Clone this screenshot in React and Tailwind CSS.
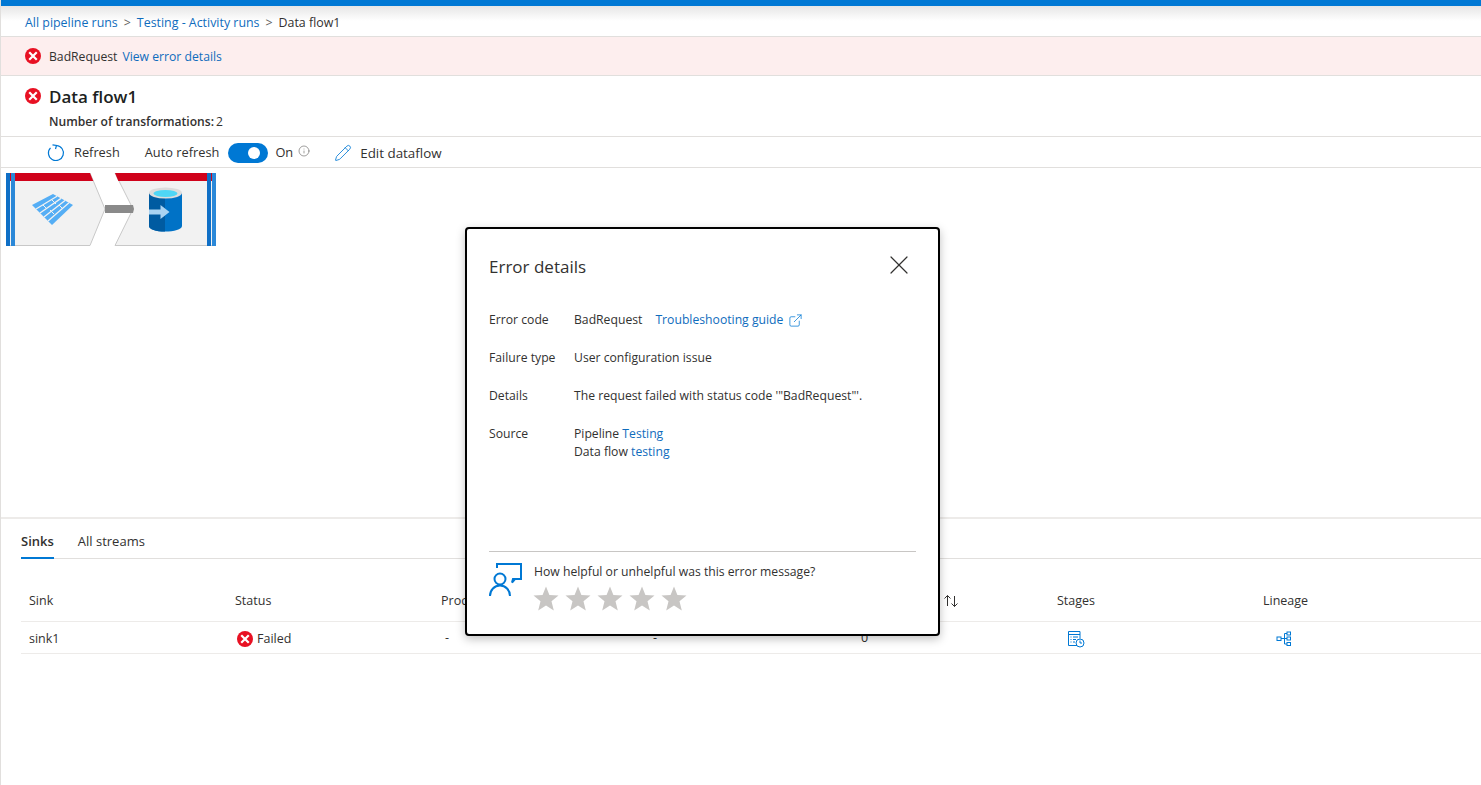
import React from 'react';
import { Pencil, X, ExternalLink, Info } from 'lucide-react';

const ErrorIcon = ({ className }) => (
  <svg viewBox="0 0 16 16" className={className}>
    <circle cx="8" cy="8" r="8" fill="#e81123" />
    <path d="M5 5l6 6M11 5l-6 6" stroke="#fff" strokeWidth="2.2" strokeLinecap="square" />
  </svg>
);

const RefreshIcon = () => (
  <svg width="18" height="18" viewBox="0 0 18 18" fill="none" stroke="#0078d4" strokeWidth="1.200">
    <path d="M9.500 1.500A7.500 7.500 0 1 1 3.500 3.800" />
    <path d="M5.500 0.800L9.500 1.500L8.500 5" />
  </svg>
);

const SortIcon = () => (
  <svg width="16" height="14" viewBox="0 0 16 14" fill="none" stroke="#323130" strokeWidth="1">
    <path d="M4.500 12V1.500M1.500 4.500l3-3 3 3M11.500 2v10.500M8.500 9.500l3 3 3-3" />
  </svg>
);

const Flow = () => (
  <svg width="210" height="73" viewBox="0 0 210 73" className="block">
    <polygon points="0,0 84,0 99,36 84,72.500 0,72.500" fill="#f2f2f2" stroke="#c8c8c8" />
    <polygon points="109,0 210,0 210,72.500 109,72.500 127,36" fill="#f2f2f2" stroke="#c8c8c8" />
    <rect x="99" y="32" width="27" height="8" fill="#8a8a8a" />
    <polygon points="126,32 127,32 128,36 127,40 126,40" fill="#8a8a8a" />
    <polygon points="0,0 84,0 87.300,8 0,8" fill="#d0021b" />
    <polygon points="109,0 210,0 210,8 112.300,8" fill="#d0021b" />
    <rect x="0" y="0" width="4" height="73" fill="#0f6fc6" />
    <rect x="5" y="0" width="4" height="73" fill="#2b88d8" />
    <rect x="201" y="0" width="4" height="73" fill="#0f6fc6" />
    <rect x="206" y="0" width="4" height="73" fill="#2b88d8" />
    <polygon points="26,32 47,21 67,32 46,52" fill="#55aef5" />
    <path d="M30 36L51 23.200M34 40L55 25.400M38 44L59 27.600M42 48L63 29.800" stroke="#f2f2f2" strokeWidth="1.300" />
    <path d="M37 32l4 4M46 27l4 4M44 37l4 4M53 32l3 3" stroke="#f2f2f2" strokeWidth="1" />
    <path d="M143 20v33c0 3.500 7 5.500 16 5.500s17-2 17-5.500v-33z" fill="#0072c6" />
    <path d="M143 20v33c0 3.500 7 5.500 16 5.500v-38z" fill="#005ba1" />
    <ellipse cx="159.500" cy="20" rx="16.500" ry="5.500" fill="#dcdcdc" />
    <ellipse cx="159.500" cy="20.500" rx="12" ry="3.500" fill="#4fd6f5" />
    <path d="M143 36.500h11.500v-4.500l9 7-9 7v-4.500h-11.500z" fill="#a9d3f2" />
  </svg>
);

const StagesIcon = () => (
  <svg width="18" height="18" viewBox="0 0 18 18" fill="none" stroke="#0078d4" strokeWidth="1">
    <path d="M10 15.500H1.500V1.500h11.500v7" />
    <path d="M1.500 4.500h11.500M3.500 7h1M6 7h5M3.500 9.500h1M6 9.500h3M3.500 12h1M6 12h2" />
    <circle cx="13" cy="13" r="4" />
    <path d="M13 10.500V13h2" />
  </svg>
);

const LineageIcon = () => (
  <svg width="16" height="16" viewBox="0 0 16 16" fill="none" stroke="#0078d4" strokeWidth="1">
    <rect x="1" y="6" width="4" height="3.500" />
    <rect x="11" y="1" width="3.500" height="3" />
    <rect x="11" y="6" width="3.500" height="3" />
    <rect x="11" y="11.500" width="3.500" height="3" />
    <path d="M5 7.500h6M8.500 2.500v10.500M8.500 2.500H11M8.500 13H11" />
  </svg>
);

const FeedbackIcon = () => (
  <svg width="34" height="34" viewBox="0 0 34 34" fill="none" stroke="#0078d4" strokeWidth="2" className="shrink-0">
    <path d="M8 5V1h24v15H24l-1 3.500 3-3.500" />
    <circle cx="11" cy="16" r="5.500" />
    <path d="M1 33c0-6 4.500-10.500 10-10.500S21 27 21 33" />
  </svg>
);

const Star = () => (
  <svg width="26" height="25" viewBox="0 0 26 25">
    <polygon points="13,0.500 16.400,9 25.500,9.500 18.500,15.300 20.800,24.500 13,19.500 5.200,24.500 7.500,15.300 0.500,9.500 9.600,9" fill="#c8c6c4" />
  </svg>
);

const DetailRow = ({ label, children }) => (
  <div className="flex">
    <div className="w-[85px] shrink-0">{label}</div>
    <div>{children}</div>
  </div>
);

const ErrorDialog = () => (
  <div className="absolute left-[464px] top-[227px] w-[475px] h-[409px] bg-white border-2 border-black rounded-[4px] shadow-[0_3px_10px_rgba(0,0,0,0.25)] pl-[22px] pr-[21px] text-[#323130]">
    <div className="flex items-start justify-between h-[62px] pt-[25px]">
      <h2 className="text-[17px] leading-[26px] font-normal">Error details</h2>
      <X className="w-[32px] h-[32px] -mt-[5px] mr-[2px] text-[#323130]" strokeWidth={0.9} />
    </div>
    <div className="flex flex-col gap-[20px] mt-[20px] text-[12.200px] leading-[18px]">
      <DetailRow label="Error code">
        <div className="flex items-center">
          BadRequest
          <span className="ml-[13px] text-[#0f6cbd]">Troubleshooting guide</span>
          <ExternalLink className="w-[15px] h-[15px] ml-[5px] text-[#0078d4]" strokeWidth={1.2} />
        </div>
      </DetailRow>
      <DetailRow label="Failure type">User configuration issue</DetailRow>
      <DetailRow label="Details">The request failed with status code '"BadRequest"'.</DetailRow>
      <DetailRow label="Source">
        <div>Pipeline <span className="text-[#0f6cbd]">Testing</span></div>
        <div>Data flow <span className="text-[#0f6cbd]">testing</span></div>
      </DetailRow>
    </div>
    <div className="absolute left-[22px] right-[22px] top-[322px] border-t border-[#c8c6c4] pt-[11px] flex">
      <FeedbackIcon />
      <div className="ml-[11px]">
        <div className="text-[12.200px] leading-[18px]">How helpful or unhelpful was this error message?</div>
        <div className="flex gap-[6px] mt-[5px] -ml-[1px]">
          <Star /><Star /><Star /><Star /><Star />
        </div>
      </div>
    </div>
  </div>
);

const App = () => (
  <div className="relative h-[785px] overflow-hidden bg-white border-l border-[#e1dfdd] text-[12.500px] text-[#323130] font-['Open_Sans','Noto_Sans',sans-serif]">
    <div className="h-[6px] bg-[#0078d4]" />
    <nav className="h-[31px] flex items-center pl-[24px] pt-[5px] text-[12.400px] border-b border-[#e1dfdd] bg-gradient-to-b from-[#e6e6e6] via-white to-white">
      <span className="text-[#0f6cbd]">All pipeline runs</span>
      <span className="mx-[6px] text-[#605e5c]">&gt;</span>
      <span className="text-[#0f6cbd]">Testing - Activity runs</span>
      <span className="mx-[6px] text-[#605e5c]">&gt;</span>
      <span>Data flow1</span>
    </nav>
    <div className="h-[39px] flex items-center pl-[24px] text-[12.200px] bg-[#fdeeee] border-b border-[#e1dfdd]">
      <ErrorIcon className="w-4 h-4" />
      <span className="ml-[8px] pt-[2px]">BadRequest</span>
      <span className="ml-[5px] pt-[2px] text-[#0f6cbd]">View error details</span>
    </div>
    <div className="h-[61px] pl-[24px] pt-[8px] border-b border-[#e1dfdd]">
      <div className="flex items-center h-[24px]">
        <ErrorIcon className="w-4 h-4" />
        <h1 className="ml-[8px] pt-[1px] text-[17px] font-semibold text-[#201f1e]">Data flow1</h1>
      </div>
      <div className="flex ml-[24px] mt-[5px] leading-[18px] text-[12.100px]">
        <span className="font-semibold">Number of transformations:</span>
        <span className="ml-[2px]">2</span>
      </div>
    </div>
    <div className="h-[31px] flex items-center pl-[46px] pt-[1px] text-[12.800px] border-b border-[#e1dfdd]">
      <RefreshIcon />
      <span className="ml-[9px] pt-[1px]">Refresh</span>
      <span className="ml-[25px]">Auto refresh</span>
      <div className="ml-[9px] w-[40px] h-[20px] rounded-full bg-[#0078d4] flex items-center justify-end pr-[8px]">
        <div className="w-[12px] h-[12px] rounded-full bg-white" />
      </div>
      <span className="ml-[7px]">On</span>
      <Info className="w-[12px] h-[12px] ml-[5px] mb-[3px] text-[#605e5c]" strokeWidth={1.2} />
      <Pencil className="w-[18px] h-[18px] ml-[24px] text-[#0078d4]" strokeWidth={1.1} />
      <span className="ml-[8px] pt-[1px] text-[13.400px]">Edit dataflow</span>
    </div>
    <div className="h-[351px] pl-[5px] pt-[5px] border-b-2 border-[#edebe9]">
      <Flow />
    </div>
    <div className="ml-[20px]">
      <div className="h-[40px] flex items-end gap-[24px] border-b border-[#e1dfdd] text-[13px]">
        <div className="h-[39px] flex items-center pt-[7px] font-semibold border-b-2 border-[#0078d4] -mb-[1px]">Sinks</div>
        <div className="h-[39px] flex items-center pt-[7px]">All streams</div>
      </div>
      <div className="grid grid-cols-[206px_206px_206px_206px_204px_206px_206px] h-[63px] pt-[22px] pl-[8px] items-center border-b border-[#edebe9]">
        <div>Sink</div>
        <div>Status</div>
        <div>Processing time</div>
        <div />
        <div className="pl-[90px]"><SortIcon /></div>
        <div>Stages</div>
        <div>Lineage</div>
      </div>
      <div className="grid grid-cols-[206px_206px_206px_206px_204px_206px_206px] h-[32px] pl-[8px] pt-[2px] items-center border-b border-[#edebe9]">
        <div className="pt-[2px]">sink1</div>
        <div className="flex items-center">
          <ErrorIcon className="w-4 h-4 ml-[2px]" />
          <span className="ml-[4px] pt-[2px]">Failed</span>
        </div>
        <div className="pl-[4px]">-</div>
        <div className="pl-[6px]">-</div>
        <div className="pl-[8px]">0</div>
        <div className="pl-[10px]"><StagesIcon /></div>
        <div className="pl-[13px]"><LineageIcon /></div>
      </div>
    </div>
    <ErrorDialog />
  </div>
);

export default App;
